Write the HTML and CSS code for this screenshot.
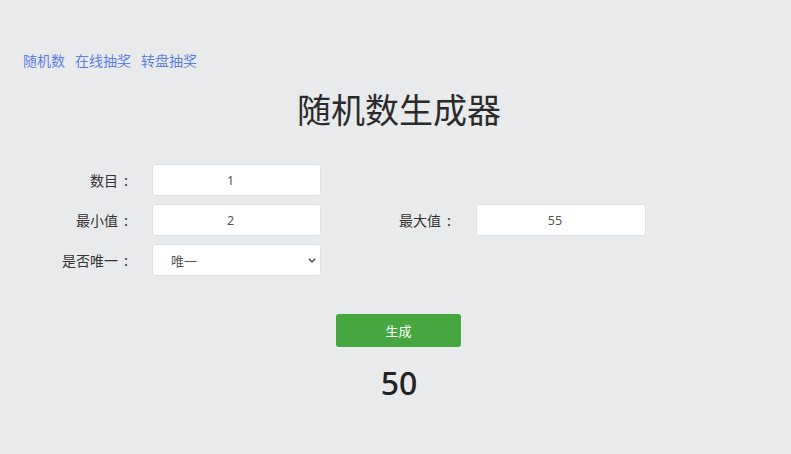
FILE: index.html
```html
<!DOCTYPE html>
<html lang="zh-CN">
<head>
<meta charset="utf-8">
<title>随机数生成器</title>
<link rel="stylesheet" href="styles.css">
</head>
<body>
<nav class="nav">
  <a href="#" class="nav-link">随机数</a>
  <a href="#" class="nav-link">在线抽奖</a>
  <a href="#" class="nav-link">转盘抽奖</a>
</nav>
<h1 class="title">随机数生成器</h1>
<form class="form">
  <label class="label">数目<span class="colon">:</span></label>
  <input class="field" type="text" value="1">
  <span class="empty"></span>
  <span class="empty"></span>

  <label class="label">最小值<span class="colon">:</span></label>
  <input class="field" type="text" value="2">
  <label class="label label-2">最大值<span class="colon">:</span></label>
  <input class="field" type="text" value="55">

  <label class="label">是否唯一<span class="colon">:</span></label>
  <div class="select-wrap">
    <select class="select">
      <option>唯一</option>
      <option>不唯一</option>
    </select>
    <svg class="chevron" width="8" height="5" viewBox="0 0 8 5"><path d="M0.8 0.8l3.2 3.2 3.2-3.2" fill="none" stroke="#444" stroke-width="1.3"/></svg>
  </div>
  <span class="empty"></span>
  <span class="empty"></span>
</form>
<div class="actions">
  <button class="btn" type="button">生成</button>
</div>
<div class="result">50</div>
</body>
</html>
```
FILE: styles.css
```css
html, body {
  margin: 0;
  padding: 0;
  background: #e9eaec;
  color: #333;
  font-family: "Noto Sans CJK SC", "Noto Sans", sans-serif;
}
.nav {
  padding: 52px 0 0 23px;
  display: flex;
  gap: 10px;
  font-size: 14px;
  line-height: 16px;
}
.nav-link {
  color: #5b80e3;
  text-decoration: none;
}
.title {
  margin: 21px 0 0;
  padding-left: 7px;
  text-align: center;
  font-size: 34px;
  font-weight: 400;
  line-height: 40px;
  color: #2b2b2b;
}
.form {
  margin-top: 35px;
  display: grid;
  grid-template-columns: 152px 169px 155px 170px;
  grid-auto-rows: 32px;
  row-gap: 8px;
}
.label {
  align-self: center;
  text-align: right;
  padding-right: 19px;
  font-size: 14px;
  line-height: 16px;
  color: #333;
}
.label-2 {
  padding-right: 20px;
}
.colon {
  display: inline-block;
  width: 14px;
  margin-left: 1px;
  text-align: center;
}
.field, .select {
  box-sizing: border-box;
  width: 100%;
  height: 32px;
  border: 1px solid #dcdfe3;
  border-radius: 3px;
  background: #fff;
  font-family: "Noto Sans", "Noto Sans CJK SC", sans-serif;
  font-size: 12.5px;
  color: #555;
  text-align: center;
  outline: none;
  margin: 0;
}
.field {
  padding: 0 12px 0 0;
}
.select-wrap {
  position: relative;
}
.select {
  appearance: none;
  -webkit-appearance: none;
  text-align: left;
  padding-left: 18px;
  font-family: "Noto Sans CJK SC", sans-serif;
  font-size: 13px;
  color: #555;
}
.chevron {
  position: absolute;
  right: 5px;
  top: 14px;
  pointer-events: none;
}
.actions {
  margin-top: 38px;
  padding-left: 7px;
  display: flex;
  justify-content: center;
}
.btn {
  width: 125px;
  height: 33px;
  margin-left: -1px;
  border: none;
  border-radius: 3px;
  background: #46a640;
  color: #fff;
  font-family: "Noto Sans CJK SC", sans-serif;
  font-size: 13px;
}
.result {
  margin-top: 14px;
  padding-left: 7px;
  text-align: center;
  font-family: "Noto Sans", sans-serif;
  font-size: 32px;
  font-weight: 500;
  line-height: 44px;
  color: #222;
}
```
